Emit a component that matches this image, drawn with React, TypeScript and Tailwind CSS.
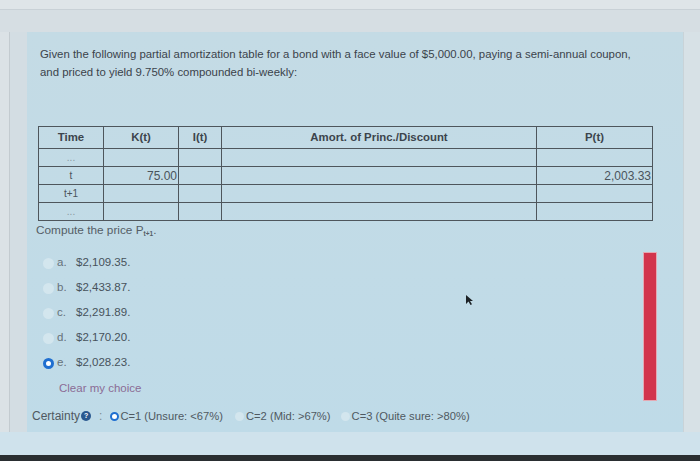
import React from 'react'

const font = { fontFamily: '"Liberation Sans", Arial, sans-serif' }

const rows = [
  { time: '...', k: '', p: '', faint: true },
  { time: 't', k: '75.00', p: '2,003.33' },
  { time: 't+1', k: '', p: '' },
  { time: '...', k: '', p: '', faint: true },
]

const options = [
  { l: 'a.', v: '$2,109.35.' },
  { l: 'b.', v: '$2,433.87.' },
  { l: 'c.', v: '$2,291.89.' },
  { l: 'd.', v: '$2,170.20.' },
  { l: 'e.', v: '$2,028.23.', on: true },
]

function Radio({ on, small }: { on?: boolean; small?: boolean }) {
  const size = small ? 'w-[9px] h-[9px]' : 'w-[11px] h-[11px]'
  if (on)
    return (
      <span
        className={`${size} block rounded-full ${
          small ? 'border-[2.5px]' : 'border-[3px]'
        } border-[#1f6fd0] bg-white shrink-0`}
      />
    )
  return <span className={`${size} block rounded-full bg-[#d3e6ee] shrink-0`} />
}

export default function App() {
  return (
    <div
      className="relative w-[700px] h-[461px] overflow-hidden bg-[#d7dfe4] flex flex-col"
      style={font}
    >
      {/* top chrome */}
      <div className="h-[10px] bg-[#dfe5e8] border-b border-[#c9d1d6]" />
      <div className="h-[22px] bg-[#d6dee3]" />

      <div className="flex h-[400px]">
        <div className="w-[10px] bg-[#dbe2e6] border-r border-[#c3cbd0]" />
        <div className="w-[17px] bg-[#d3dde3]" />

        {/* panel */}
        <div className="w-[656px] bg-gradient-to-b from-[#c4dbe5] to-[#bfdbe8] flex flex-col pl-[11px]">
          <p className="mt-[13px] pl-[2px] text-[11.4px] leading-[18px] text-[#3b434b] whitespace-nowrap">
            Given the following partial amortization table for a bond with a face value of $5,000.00,
            paying a semi-annual coupon,
            <br />
            and priced to yield 9.750% compounded bi-weekly:
          </p>

          <table className="mt-[45px] w-[615px] border-collapse text-[11.4px] text-[#3c444c]">
            <thead>
              <tr className="h-[22px]">
                <th className="w-[65px] border border-[#4e565c] font-semibold">Time</th>
                <th className="w-[75px] border border-[#4e565c] font-semibold">K(t)</th>
                <th className="w-[43px] border border-[#4e565c] font-semibold">I(t)</th>
                <th className="w-[315px] border border-[#4e565c] font-semibold">
                  Amort. of Princ./Discount
                </th>
                <th className="border border-[#4e565c] font-semibold">P(t)</th>
              </tr>
            </thead>
            <tbody>
              {rows.map((r, i) => (
                <tr key={i} className="h-[18px]">
                  <td
                    className={`border border-[#4e565c] text-center text-[10px] leading-[16px] ${
                      r.faint ? 'text-[#8a98a2]' : 'text-[#4a545c]'
                    }`}
                  >
                    {r.time}
                  </td>
                  <td className="border border-[#4e565c] text-right pr-[1px] text-[12px] leading-[16px] text-[#4a545c]">
                    {r.k}
                  </td>
                  <td className="border border-[#4e565c]" />
                  <td className="border border-[#4e565c]" />
                  <td className="border border-[#4e565c] text-right pr-[1px] text-[12px] leading-[16px] text-[#4a545c]">
                    {r.p}
                  </td>
                </tr>
              ))}
            </tbody>
          </table>

          <p className="mt-[1px] -ml-[2px] text-[11.8px] leading-[16px] text-[#555e66]">
            Compute the price P<sub className="text-[6.5px] font-bold">t+1</sub>.
          </p>

          <div className="flex">
            <div className="flex flex-col mt-[18px] gap-[11px] pl-[5px] text-[11.5px] text-[#47525b]">
              {options.map((o) => (
                <div key={o.l} className="flex items-center h-[14px]">
                  <Radio on={o.on} />
                  <span className="ml-[3px] w-[19px] text-[#66717a]">{o.l}</span>
                  <span>{o.v}</span>
                </div>
              ))}
              <div className="pl-[16px] -mt-[1px] text-[11.5px] text-[#8b6c95]">Clear my choice</div>
            </div>
            <div className="flex-1" />
            <div className="w-[14px] h-[149px] mt-[14px] mr-[26px] bg-[#d2344c] border border-[#e5a9b3]" />
          </div>

          <div className="mt-[6px] -ml-[6px] flex items-center text-[12px] text-[#4f5961]">
            <span>Certainty</span>
            <span className="ml-[1px] w-[10px] h-[10px] rounded-full bg-[#29588f] text-white text-[7px] font-bold flex items-center justify-center">
              ?
            </span>
            <span className="ml-[8px] text-[#7d8a92]">:</span>
            <span className="ml-[8px] flex">
              <Radio on small />
            </span>
            <span className="ml-[1px] text-[11.2px]">C=1 (Unsure: &lt;67%)</span>
            <span className="ml-[12px] flex">
              <Radio small />
            </span>
            <span className="ml-[2px] text-[11.2px]">C=2 (Mid: &gt;67%)</span>
            <span className="ml-[10px] flex">
              <Radio small />
            </span>
            <span className="ml-[2px] text-[11.2px]">C=3 (Quite sure: &gt;80%)</span>
          </div>
        </div>

        <div className="flex-1 bg-[#d7e1e6] border-l border-[#c9d3d8]" />
      </div>

      <div className="h-[23px] bg-[#cfe2ec]" />
      <div className="flex-1 bg-[#2a2e31]" />

      {/* mouse pointer */}
      <svg
        className="absolute left-[465px] top-[294px]"
        width="9"
        height="12"
        viewBox="0 0 9 12"
      >
        <path d="M1 1 L1 10 L3.5 7.5 L5.5 11 L7 10.3 L5 7 L8 7 Z" fill="#1d2226" />
      </svg>
    </div>
  )
}
